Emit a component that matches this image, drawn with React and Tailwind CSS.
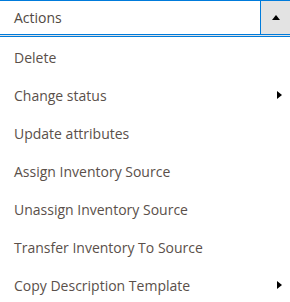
import React from "react";

const items = [
  { label: "Delete" },
  { label: "Change status", sub: true },
  { label: "Update attributes" },
  { label: "Assign Inventory Source" },
  { label: "Unassign Inventory Source" },
  { label: "Transfer Inventory To Source" },
  { label: "Copy Description Template", sub: true },
];

export default function App() {
  return (
    <div className="w-[290px] h-[302px] bg-white overflow-hidden" style={{ fontFamily: '"Open Sans", sans-serif' }}>
      <div className="flex h-[33px] border-t border-b border-[#007bdb] box-content">
        <div className="flex-1 flex items-center pl-[14px] text-[14px] text-[#514943]">Actions</div>
        <div className="w-[30px] bg-[#e3e3e3] border-l border-[#007bdb] flex items-center justify-center">
          <svg width="8" height="5" viewBox="0 0 8 5"><path d="M0 5 L4 0 L8 5 Z" fill="#000" /></svg>
        </div>
      </div>
      <div className="h-px bg-[#e3e3e3]" />
      <div className="border-t border-[#007bdb] pt-px">
        {items.map((it) => (
          <div key={it.label} className="h-[38px] flex items-center justify-between pl-[14px] pr-[8px] text-[14px] text-[#5a504a]">
            <span>{it.label}</span>
            {it.sub && (
              <svg width="5" height="8" viewBox="0 0 5 8"><path d="M0 0 L5 4 L0 8 Z" fill="#000" /></svg>
            )}
          </div>
        ))}
      </div>
    </div>
  );
}
